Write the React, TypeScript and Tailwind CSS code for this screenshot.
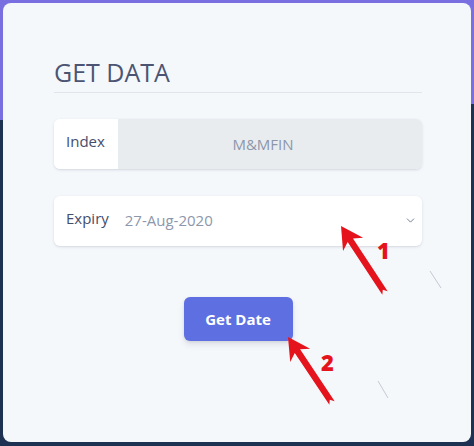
import { ChevronDown } from 'lucide-react';

type Pt = [number, number];

// builds a ribbon-tailed arrow pointing from tail to tip
function arrowPoints(tip: Pt, tail: Pt, headLen = 22, headW = 12, shaftW = 3.2, notch = 4) {
  const dx = tip[0] - tail[0];
  const dy = tip[1] - tail[1];
  const len = Math.hypot(dx, dy);
  const u: Pt = [dx / len, dy / len];
  const n: Pt = [-u[1], u[0]];
  const b: Pt = [tip[0] - u[0] * headLen, tip[1] - u[1] * headLen];
  const back: Pt = [b[0] + u[0] * 5, b[1] + u[1] * 5];
  const p = (o: Pt, v: Pt, k: number) => `${o[0] + v[0] * k},${o[1] + v[1] * k}`;
  return [
    `${tip[0]},${tip[1]}`,
    p(b, n, headW),
    p(back, n, shaftW),
    p(tail, n, shaftW),
    p(tail, u, notch),
    p(tail, n, -shaftW),
    p(back, n, -shaftW),
    p(b, n, -headW),
  ].join(' ');
}

function Annotations() {
  return (
    <svg className="pointer-events-none absolute inset-0" width="474" height="446" viewBox="0 0 474 446">
      <polygon points={arrowPoints([341, 226], [385, 293])} fill="#e5141c" />
      <polygon points={arrowPoints([288, 337], [332, 403])} fill="#e5141c" />
      <text x="377" y="259" fill="#e5141c" fontFamily="'Open Sans', sans-serif" fontWeight="800" fontSize="22">1</text>
      <text x="321" y="371" fill="#e5141c" fontFamily="'Open Sans', sans-serif" fontWeight="800" fontSize="22">2</text>
      <line x1="430" y1="271" x2="441" y2="288" stroke="#b8bec8" strokeWidth="0.8" />
      <line x1="378" y1="381" x2="388" y2="398" stroke="#b8bec8" strokeWidth="0.8" />
    </svg>
  );
}

export default function App() {
  return (
    <div className="relative h-[446px] w-[474px] bg-[linear-gradient(178deg,#7a6fe0_120px,#1d3252_120px)] p-[3px] pb-[4px] font-['Open_Sans',sans-serif]">
      <div className="flex h-full flex-col rounded-[8px] bg-[#f5f8fb] pl-[51px] pr-[49px] pt-[53px]">
        <h1 className="border-b border-[#e2e6ec] pb-[4px] text-[25px] leading-[32px] font-normal text-[#4b5573]">
          GET DATA
        </h1>

        <div className="mt-[26px] flex h-[50px] overflow-hidden rounded-[6px] shadow-[0_1px_3px_rgba(50,50,93,0.15),0_1px_0_rgba(0,0,0,0.02)]">
          <div className="flex w-[64px] items-center bg-white pb-[5px] pl-[12px] text-[15px] text-[#444e6b]">Index</div>
          <div className="flex flex-1 items-center justify-center bg-[#e9ecef] pr-[14px] text-[15px] text-[#8c97ab]">M&amp;MFIN</div>
        </div>

        <div className="mt-[27px] flex h-[50px] items-center rounded-[6px] bg-white pl-[12px] pr-[5px] shadow-[0_1px_3px_rgba(50,50,93,0.15),0_1px_0_rgba(0,0,0,0.02)]">
          <span className="pb-[6px] text-[15px] text-[#444e6b]">Expiry</span>
          <span className="ml-[16px] pb-[2px] text-[15px] text-[#8c97ab]">27-Aug-2020</span>
          <ChevronDown className="ml-auto mb-[2px] text-[#717d93]" size={13} strokeWidth={1.8} />
        </div>

        <div className="mt-[51px] flex justify-center">
          <button className="h-[44px] w-[109px] rounded-[6px] bg-[#5e6fe2] text-[15px] font-bold text-white shadow-[0_4px_6px_rgba(50,50,93,0.11),0_1px_3px_rgba(0,0,0,0.08)]">
            Get Date
          </button>
        </div>
      </div>
      <Annotations />
    </div>
  );
}
